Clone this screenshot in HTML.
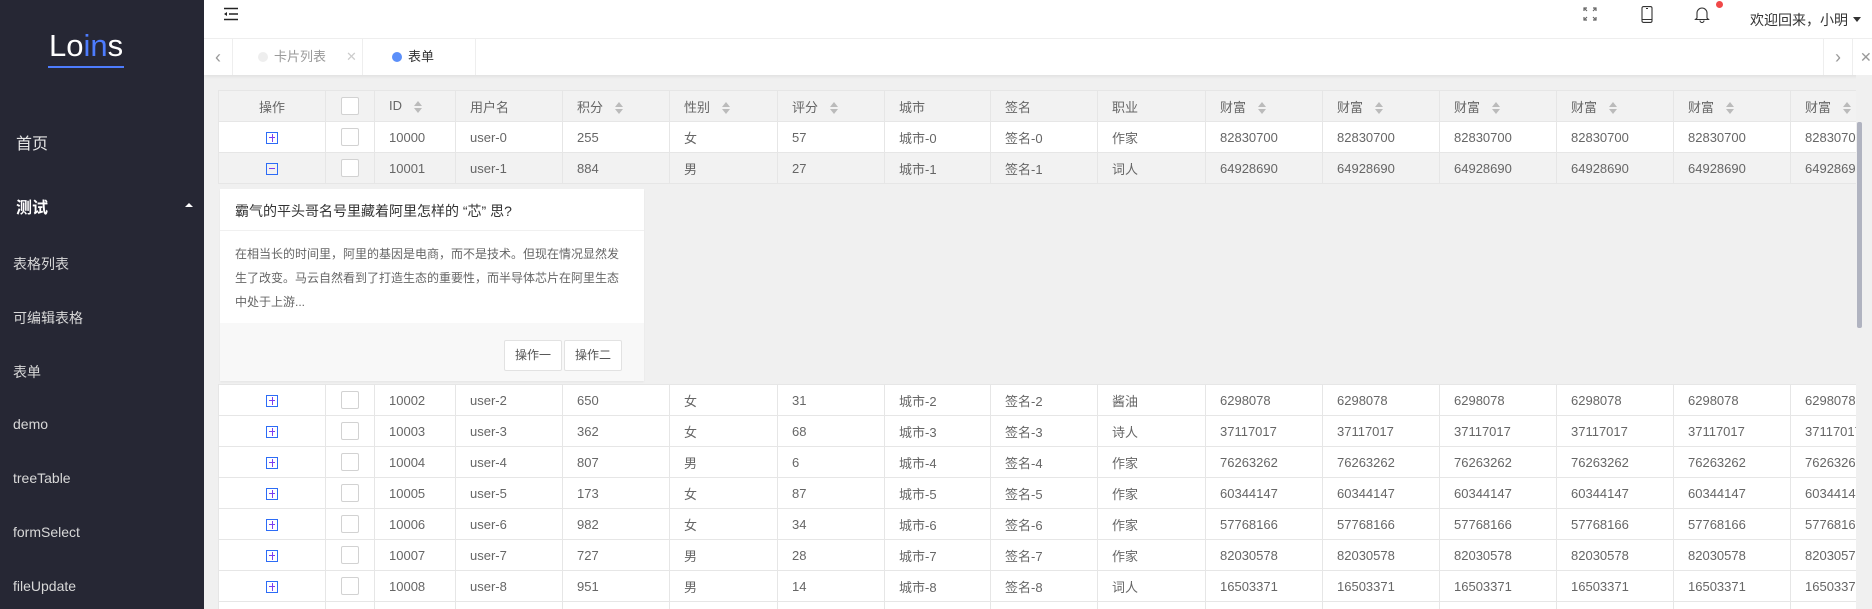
<!DOCTYPE html>
<html style="overflow:hidden;width:1872px;height:609px"><head><meta charset="utf-8">
<style>
*{margin:0;padding:0;box-sizing:border-box}
body{width:1872px;height:609px;overflow:hidden;font-family:"Liberation Sans","Noto Sans CJK SC",sans-serif;background:#f0f0f0;position:relative;color:#666}
.side{position:absolute;left:0;top:0;width:204px;height:609px;background:#262734;color:#ddd}
.logo{position:absolute;left:48px;top:28px;font-size:31px;color:#fff;border-bottom:2px solid #4d7cfe;line-height:36px;padding:0 1px 2px}
.logo b{font-weight:normal;color:#4d7cfe}
.mi{position:absolute;left:16px;font-size:16px;color:#e6e6e6}
.si{position:absolute;left:13px;font-size:14px;color:#d8d8d8}
.top{position:absolute;left:204px;top:0;right:0;height:39px;background:#fff;border-bottom:1px solid #eee}
.tabs{position:absolute;left:204px;top:39px;right:0;height:36px;background:#fff;box-shadow:0 2px 3px rgba(0,0,0,.06)}
.tab{position:absolute;top:0;height:36px;border-right:1px solid #eee;font-size:13px;line-height:36px}
.dot{display:inline-block;width:10px;height:10px;border-radius:50%;vertical-align:-1px;margin-right:6px}
.wrap{position:absolute;left:218px;width:1638px;overflow:hidden}
table{border-collapse:collapse;table-layout:fixed;font-size:13px;color:#666;width:1688px}
td{border:1px solid #e6e6e6;height:31px;padding:0 0 0 14px;white-space:nowrap;overflow:hidden;background:#fff}
.h td{background:#f2f2f2}
.g td{background:#f2f2f2}
td.c{text-align:center;padding:0}
.cb{display:inline-block;width:18px;height:18px;border:1px solid #d2d2d2;border-radius:2px;background:#fff;vertical-align:middle}
.ex{display:inline-block;width:12px;height:12px;border:1px solid #2d6cf6;position:relative;vertical-align:middle}
.ex:before{content:"";position:absolute;left:2px;top:4px;width:6px;height:1px;background:#7b3ff2}
.ex.p:after{content:"";position:absolute;left:5px;top:1px;width:1px;height:8px;background:#7b3ff2}
.s{display:inline-block;width:0;height:14px;margin-left:12px;vertical-align:middle;position:relative}
.s:before{content:"";position:absolute;top:1px;border:4.5px solid transparent;border-bottom:5px solid #bbb;border-top:0}
.s:after{content:"";position:absolute;top:8px;border:4.5px solid transparent;border-top:5px solid #bbb;border-bottom:0}
.card{position:absolute;left:220px;top:189px;width:424px;height:192px;background:#fff;box-shadow:0 1px 2px rgba(0,0,0,.05)}
.btn{position:absolute;top:151px;width:58px;height:31px;border:1px solid #e2e2e2;background:#fff;font-size:12px;text-align:center;line-height:29px;color:#555;border-radius:2px}
</style></head><body>
<div class="side">
<div class="logo">Lo<b>in</b>s</div>
<div class="mi" style="top:130px">首页</div>
<div class="mi" style="top:194px;font-weight:bold;color:#fff">测试</div>
<div style="position:absolute;left:185px;top:203px;border:4px solid transparent;border-bottom:4px solid #fff;border-top:0"></div>
<div class="si" style="top:254px">表格列表</div>
<div class="si" style="top:308px">可编辑表格</div>
<div class="si" style="top:362px">表单</div>
<div class="si" style="top:416px">demo</div>
<div class="si" style="top:470px">treeTable</div>
<div class="si" style="top:524px">formSelect</div>
<div class="si" style="top:578px">fileUpdate</div>
</div>
<div class="top">
<svg style="position:absolute;left:19px;top:7px" width="18" height="14" viewBox="0 0 18 14"><path d="M1 1.5H15M6 7H15M1 12.5H15" stroke="#222" stroke-width="1.5"/><path d="M1 7l3-2v4z" fill="#222"/></svg>
<svg style="position:absolute;left:1379px;top:7px" width="14" height="14" viewBox="0 0 14 14" fill="none" stroke="#666" stroke-width="1.2"><path d="M1 4V1h3M10 1h3v3M13 10v3h-3M4 13H1v-3M1 1l3 3M13 1l-3 3M13 13l-3-3M1 13l3-3"/></svg>
<svg style="position:absolute;left:1437px;top:6px" width="12" height="17" viewBox="0 0 12 17" fill="none" stroke="#333" stroke-width="1.1"><rect x="1" y="0.6" width="10" height="15.8" rx="1.5"/><path d="M1 13.5H11M5 2.5h2"/></svg>
<svg style="position:absolute;left:1490px;top:6px" width="16" height="17" viewBox="0 0 16 17" fill="none" stroke="#333" stroke-width="1.1"><path d="M3 12V7a5 5 0 0110 0v5l1.5 1.5h-13zM6 14.5a2 2 0 004 0"/></svg>
<div style="position:absolute;left:1512px;top:1px;width:7px;height:7px;border-radius:50%;background:#f04848"></div>
<div style="position:absolute;left:1546px;top:10px;font-size:14px;color:#333">欢迎回来，小明</div>
<div style="position:absolute;left:1649px;top:17px;border:4px solid transparent;border-top:5px solid #333;border-bottom:0"></div>
</div>
<div class="tabs">
<div class="tab" style="left:0;width:29px;text-align:center;font-size:18px;color:#999">&lsaquo;</div>
<div class="tab" style="left:29px;width:130px;padding-left:25px;color:#999"><span class="dot" style="background:#eee"></span>卡片列表<span style="margin-left:20px;color:#ccc">✕</span></div>
<div class="tab" style="left:159px;width:113px;padding-left:29px;color:#333"><span class="dot" style="background:#5b8ff9"></span>表单</div>
<div style="position:absolute;left:1619px;top:0;width:30px;height:36px;border-left:1px solid #eee;border-right:1px solid #eee;text-align:center;line-height:36px;font-size:18px;color:#999">&rsaquo;</div>
<div style="position:absolute;left:1656px;top:0;line-height:36px;font-size:14px;color:#999">✕</div>
</div>
<div class="wrap" style="top:90px">
<table>
<colgroup><col style="width:107px"><col style="width:49px"><col style="width:81px"><col style="width:107px"><col style="width:107px"><col style="width:108px"><col style="width:107px"><col style="width:106px"><col style="width:107px"><col style="width:108px"><col style="width:117px"><col style="width:117px"><col style="width:117px"><col style="width:117px"><col style="width:117px"><col style="width:117px"></colgroup>
<tr class="h"><td class="c">操作</td><td class="c"><span class="cb"></span></td><td>ID<span class="s"></span></td><td>用户名</td><td>积分<span class="s"></span></td><td>性别<span class="s"></span></td><td>评分<span class="s"></span></td><td>城市</td><td>签名</td><td>职业</td><td>财富<span class="s"></span></td><td>财富<span class="s"></span></td><td>财富<span class="s"></span></td><td>财富<span class="s"></span></td><td>财富<span class="s"></span></td><td>财富<span class="s"></span></td></tr>
<tr><td class="c"><span class="ex p"></span></td><td class="c"><span class="cb"></span></td><td>10000</td><td>user-0</td><td>255</td><td>女</td><td>57</td><td>城市-0</td><td>签名-0</td><td>作家</td><td>82830700</td><td>82830700</td><td>82830700</td><td>82830700</td><td>82830700</td><td>82830700</td></tr>
<tr class="g"><td class="c"><span class="ex"></span></td><td class="c"><span class="cb"></span></td><td>10001</td><td>user-1</td><td>884</td><td>男</td><td>27</td><td>城市-1</td><td>签名-1</td><td>词人</td><td>64928690</td><td>64928690</td><td>64928690</td><td>64928690</td><td>64928690</td><td>64928690</td></tr>
</table></div>
<div class="card">
<div style="position:absolute;left:15px;top:12px;font-size:14px;color:#333">霸气的平头哥名号里藏着阿里怎样的 “芯” 思?</div>
<div style="position:absolute;left:0;right:0;top:41px;border-top:1px solid #f0f0f0"></div>
<div style="position:absolute;left:15px;top:53px;width:388px;font-size:12px;line-height:24px;color:#666">在相当长的时间里，阿里的基因是电商，而不是技术。但现在情况显然发生了改变。马云自然看到了打造生态的重要性，而半导体芯片在阿里生态中处于上游...</div>
<div style="position:absolute;left:0;right:0;top:134px;bottom:0;background:#f8f8f8"></div>
<div class="btn" style="left:284px">操作一</div>
<div class="btn" style="left:344px">操作二</div>
</div>
<div class="wrap" style="top:384px;height:225px">
<table>
<colgroup><col style="width:107px"><col style="width:49px"><col style="width:81px"><col style="width:107px"><col style="width:107px"><col style="width:108px"><col style="width:107px"><col style="width:106px"><col style="width:107px"><col style="width:108px"><col style="width:117px"><col style="width:117px"><col style="width:117px"><col style="width:117px"><col style="width:117px"><col style="width:117px"></colgroup>
<tr><td class="c"><span class="ex p"></span></td><td class="c"><span class="cb"></span></td><td>10002</td><td>user-2</td><td>650</td><td>女</td><td>31</td><td>城市-2</td><td>签名-2</td><td>酱油</td><td>6298078</td><td>6298078</td><td>6298078</td><td>6298078</td><td>6298078</td><td>6298078</td></tr>
<tr><td class="c"><span class="ex p"></span></td><td class="c"><span class="cb"></span></td><td>10003</td><td>user-3</td><td>362</td><td>女</td><td>68</td><td>城市-3</td><td>签名-3</td><td>诗人</td><td>37117017</td><td>37117017</td><td>37117017</td><td>37117017</td><td>37117017</td><td>37117017</td></tr>
<tr><td class="c"><span class="ex p"></span></td><td class="c"><span class="cb"></span></td><td>10004</td><td>user-4</td><td>807</td><td>男</td><td>6</td><td>城市-4</td><td>签名-4</td><td>作家</td><td>76263262</td><td>76263262</td><td>76263262</td><td>76263262</td><td>76263262</td><td>76263262</td></tr>
<tr><td class="c"><span class="ex p"></span></td><td class="c"><span class="cb"></span></td><td>10005</td><td>user-5</td><td>173</td><td>女</td><td>87</td><td>城市-5</td><td>签名-5</td><td>作家</td><td>60344147</td><td>60344147</td><td>60344147</td><td>60344147</td><td>60344147</td><td>60344147</td></tr>
<tr><td class="c"><span class="ex p"></span></td><td class="c"><span class="cb"></span></td><td>10006</td><td>user-6</td><td>982</td><td>女</td><td>34</td><td>城市-6</td><td>签名-6</td><td>作家</td><td>57768166</td><td>57768166</td><td>57768166</td><td>57768166</td><td>57768166</td><td>57768166</td></tr>
<tr><td class="c"><span class="ex p"></span></td><td class="c"><span class="cb"></span></td><td>10007</td><td>user-7</td><td>727</td><td>男</td><td>28</td><td>城市-7</td><td>签名-7</td><td>作家</td><td>82030578</td><td>82030578</td><td>82030578</td><td>82030578</td><td>82030578</td><td>82030578</td></tr>
<tr><td class="c"><span class="ex p"></span></td><td class="c"><span class="cb"></span></td><td>10008</td><td>user-8</td><td>951</td><td>男</td><td>14</td><td>城市-8</td><td>签名-8</td><td>词人</td><td>16503371</td><td>16503371</td><td>16503371</td><td>16503371</td><td>16503371</td><td>16503371</td></tr>
<tr><td class="c"></td><td class="c"></td><td></td><td></td><td></td><td></td><td></td><td></td><td></td><td></td><td></td><td></td><td></td><td></td><td></td><td></td></tr>
</table></div>
<div style="position:absolute;left:1856px;top:75px;width:16px;height:534px;background:#f0f0f0"></div>
<div style="position:absolute;left:1857px;top:122px;width:5px;height:206px;background:#b0b3c0;border-radius:2px"></div>
</body></html>
